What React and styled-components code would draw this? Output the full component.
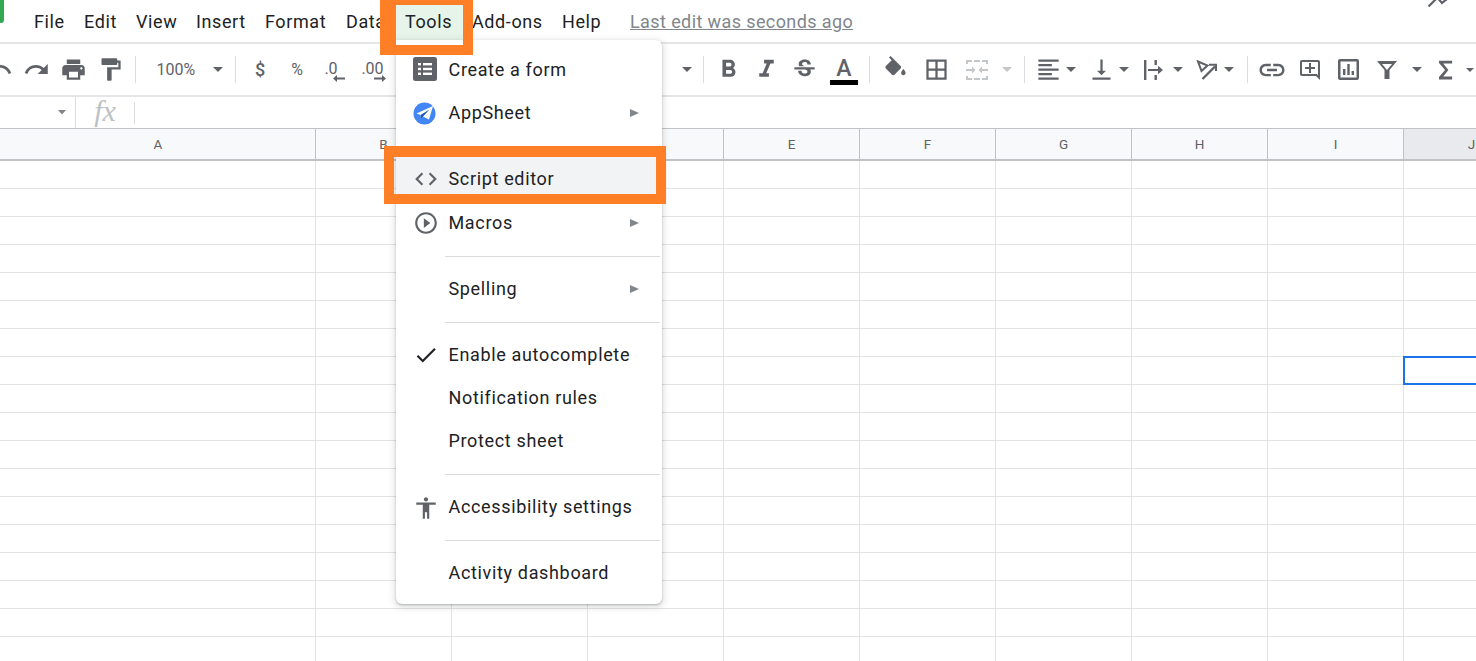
import React from 'react';
import styled, { createGlobalStyle } from 'styled-components';
import {
  MdRedo, MdUndo, MdPrint, MdFormatPaint, MdFormatBold, MdFormatItalic, MdStrikethroughS,
  MdBorderAll, MdFormatAlignLeft, MdVerticalAlignBottom, MdInsertLink,
  MdOutlineAddComment, MdCode, MdPlayCircleOutline,
  MdCheck, MdAccessibility,
} from 'react-icons/md';

const Global = createGlobalStyle`
  html, body { margin: 0; padding: 0; background: #fff; }
  body { font-family: Roboto, "Liberation Sans", sans-serif; color: #202124; }
`;

const Page = styled.div`
  position: relative;
  width: 1476px;
  height: 661px;
  overflow: hidden;
  display: flex;
  flex-direction: column;
  background: #fff;
`;

const MenuBar = styled.div`
  height: 42px;
  flex: none;
  display: flex;
  align-items: flex-start;
  border-bottom: 2px solid #e3e5e8;
  box-sizing: content-box;
`;
const Logo = styled.div`
  width: 4px;
  height: 23px;
  flex: none;
  background: #34a853;
  border-radius: 0 0 3px 0;
  margin-right: 30px;
`;
const MenuLabel = styled.span`
  font-size: 18px;
  letter-spacing: 0.6px;
  line-height: 43px;
  width: ${p => p.$w}px;
  flex: none;
  white-space: nowrap;
  color: #202124;
`;
const LastEdit = styled.span`
  font-size: 18px;
  letter-spacing: 0.4px;
  line-height: 43px;
  color: #80868b;
  text-decoration: underline;
  white-space: nowrap;
`;
const Collapse = styled.svg`
  margin-left: auto;
  margin-right: 28px;
  flex: none;
`;

const Toolbar = styled.div`
  height: 51px;
  flex: none;
  display: flex;
  align-items: center;
  margin-left: -19.5px;
  border-bottom: 2px solid #e3e5e8;
`;
const Cell = styled.div`
  width: ${p => p.$w || 37}px;
  margin-left: ${p => p.$ml || 0}px;
  flex: none;
  height: 100%;
  display: flex;
  flex-direction: column;
  align-items: center;
  justify-content: center;
  color: ${p => p.$muted ? '#c4c7c9' : '#5f6368'};
  font-size: ${p => p.$size || 27}px;
  position: relative;
`;
const Caret = styled.div`
  width: ${p => p.$w || 11}px;
  margin-left: ${p => p.$ml || 0}px;
  flex: none;
  display: flex;
  justify-content: center;
  &::before {
    content: '';
    border-left: ${p => p.$small ? 4 : 5.5}px solid transparent;
    border-right: ${p => p.$small ? 4 : 5.5}px solid transparent;
    border-top: ${p => p.$small ? 4 : 5.5}px solid ${p => p.$muted ? '#c4c7c9' : '#5f6368'};
  }
`;
const Sep = styled.div`
  width: 1px;
  height: 27px;
  flex: none;
  background: #dadce0;
  margin: 0 ${p => p.$mr ?? 6}px 0 ${p => p.$ml ?? 6}px;
`;
const ZoomText = styled.div`
  width: 64px;
  flex: none;
  font-size: 16px;
  color: #5f6368;
  padding-left: 15px;
  box-sizing: border-box;
`;
const SymbolText = styled.span`
  font-size: ${p => p.$size || 16}px;
  line-height: 18px;
  font-weight: ${p => p.$bold ? 500 : 400};
  color: #5f6368;
`;
const DecimalText = styled.span`
  font-size: 16px;
  line-height: 14px;
  color: #5f6368;
  margin-top: 5px;
  margin-left: ${p => p.$shift}px;
`;
const TinyArrow = styled.svg`
  display: block;
  margin-top: -0.5px;
  margin-left: ${p => p.$shift}px;
`;
const HiddenStretch = styled.div`
  width: 285px;
  flex: none;
`;
const TextColorBar = styled.div`
  width: 28px;
  height: 5px;
  background: #000;
  margin-top: -1px;
`;
const TextColorGlyph = styled.span`
  font-size: 23px;
  line-height: 24px;
  font-weight: 500;
  color: #5f6368;
  margin-top: 2px;
`;

const FormulaBar = styled.div`
  height: 31px;
  flex: none;
  display: flex;
  align-items: center;
`;
const NameBox = styled.div`
  width: 76px;
  height: 100%;
  flex: none;
  box-sizing: border-box;
  border-right: 1px solid #dadce0;
  display: flex;
  align-items: center;
  justify-content: flex-end;
  padding-right: 9px;
`;
const Fx = styled.div`
  width: 58px;
  flex: none;
  text-align: center;
  font-family: "Liberation Serif", serif;
  font-style: italic;
  font-size: 30px;
  color: #bdc1c6;
  line-height: 27px;
  height: 31px;
`;
const ShortSep = styled.div`
  width: 1px;
  height: 22px;
  background: #dadce0;
`;

const cols = '316px repeat(9, 136px)';
const HeaderRow = styled.div`
  display: grid;
  grid-template-columns: ${cols};
  height: 33px;
  flex: none;
  box-sizing: border-box;
  border-top: 1px solid #c0c2c5;
  border-bottom: 2px solid #c0c2c5;
  width: 1540px;
`;
const HeaderCell = styled.div`
  background: ${p => p.$active ? '#e8eaed' : '#f8f9fa'};
  border-right: 1px solid #c0c2c5;
  font-size: 13.5px;
  color: #5f6368;
  display: flex;
  align-items: center;
  justify-content: center;
  &:first-child { padding-left: 1px; }
`;
const Grid = styled.div`
  display: grid;
  grid-template-columns: ${cols};
  grid-auto-rows: 28px;
  width: 1540px;
`;
const GridCell = styled.div`
  box-sizing: border-box;
  border-right: 1px solid #e2e3e3;
  border-bottom: 1px solid #e2e3e3;
  position: relative;
  ${p => p.$active && `
    &::after {
      content: '';
      position: absolute;
      left: -1px; top: -1px; right: 0; bottom: -1px;
      border: 2px solid #1a73e8;
    }
  `}
`;

const Menu = styled.div`
  position: absolute;
  left: 396px;
  top: 40px;
  width: 266px;
  height: 564px;
  box-sizing: border-box;
  background: #fff;
  border-radius: 0 6px 6px 6px;
  box-shadow: 0 2px 6px 2px rgba(60,64,67,.15), 0 1px 2px rgba(60,64,67,.3);
  padding: 7px 0 0;
`;
const Item = styled.div`
  height: ${p => p.$h || 44}px;
  box-sizing: border-box;
  display: flex;
  align-items: center;
  background: ${p => p.$hover ? '#f1f3f4' : 'transparent'};
  font-size: 18px;
  letter-spacing: 0.66px;
  color: #202124;
  position: relative;
`;
const ItemIcon = styled.div`
  width: 52.5px;
  flex: none;
  padding-left: 17px;
  box-sizing: border-box;
  display: flex;
  align-items: center;
  font-size: ${p => p.$size || 26}px;
  color: ${p => p.$dark ? '#202124' : '#5f6368'};
`;
const ItemText = styled.span`
  flex: 1;
  white-space: nowrap;
  margin-top: ${p => p.$up ?? -1}px;
`;
const SubArrow = styled.div`
  width: 0;
  height: 0;
  margin-right: 23px;
  border-left: 9px solid #80868b;
  border-top: 4.5px solid transparent;
  border-bottom: 4.5px solid transparent;
`;
const Divider = styled.div`
  height: 22px;
  display: flex;
  align-items: center;
  padding: 0 2px 0 49px;
  &::before {
    content: '';
    flex: 1;
    height: 1px;
    background: ${p => p.$hidden ? 'transparent' : '#dadce0'};
  }
`;
const ToolsHighlight = styled.div`
  position: absolute;
  left: 396px;
  top: 5px;
  width: 67px;
  height: 35px;
  background: #e6f4ea;
`;
const ToolsLabel = styled.span`
  position: absolute;
  left: 405px;
  top: 0;
  font-size: 18px;
  letter-spacing: 0.6px;
  line-height: 43px;
  color: #202124;
`;
const Outline = styled.div`
  position: absolute;
  box-sizing: border-box;
  border-style: solid;
  border-color: #ff7f27;
`;
const ToolsOutline = styled(Outline)`
  left: 380px;
  top: -10px;
  width: 93px;
  height: 65px;
  border-width: 15px 10px 10px 16px;
`;
const ScriptOutline = styled(Outline)`
  left: 384px;
  top: 146px;
  width: 282px;
  height: 58px;
  border-width: 11px 10px 10px 10px;
`;

const FormIcon = () => (
  <svg width="24" height="24" viewBox="0 0 24 24">
    <rect width="24" height="24" rx="2.5" fill="#5f6368" />
    <g fill="#fff">
      <rect x="5" y="6" width="3" height="2.4" /><rect x="10" y="6" width="9" height="2.4" />
      <rect x="5" y="10.8" width="3" height="2.4" /><rect x="10" y="10.8" width="9" height="2.4" />
      <rect x="5" y="15.6" width="3" height="2.4" /><rect x="10" y="15.6" width="9" height="2.4" />
    </g>
  </svg>
);
const AppSheetIcon = () => (
  <svg width="23" height="23" viewBox="0 0 23 23">
    <circle cx="11.5" cy="11.5" r="11" fill="#4285f4" />
    <path d="M3.5 11.5 L20 4 L16 17.5 L10 14.5 L8 17.5 L7.5 13 Z" fill="#fff" />
    <path d="M7.5 13 L16.5 7.5 L10 14.5 L8 17.5 Z" fill="#1a56c4" />
  </svg>
);
const FillIcon = () => (
  <svg width="27" height="27" viewBox="0 0 24 24" fill="#5f6368">
    <path d="M16.56 8.94L7.62 0 6.21 1.41l2.38 2.38-5.15 5.15c-.59.59-.59 1.54 0 2.12l5.5 5.5c.29.29.68.44 1.06.44s.77-.15 1.06-.44l5.5-5.5c.59-.58.59-1.53 0-2.12z" />
    <path d="M19 11.500s-2 2.170-2 3.500c0 1.100.9 2 2 2s2-.9 2-2c0-1.330-2-3.500-2-3.500z" />
  </svg>
);
const MergeIcon = () => (
  <svg width="24" height="22" viewBox="0 0 24 22" fill="#c4c7c9">
    <path d="M1 1h6v2H3v2H1zM9 1h6v2H9zM17 1h6v4h-2V3h-4zM1 17h2v2h4v2H1zM21 17h2v4h-6v-2h4zM9 19h6v2H9z" />
    <path d="M1 10h6V7.5l3.5 3.5L7 14.500v-2.500H1zM23 10h-6V7.500L13.500 11l3.500 3.500v-2.500h6z" />
  </svg>
);
const WrapIcon = () => (
  <svg width="20" height="20" viewBox="0 0 20 20" fill="#5f6368">
    <rect x="0" y="0" width="2.400" height="20" />
    <rect x="10.500" y="0" width="2.400" height="5" /><rect x="10.500" y="15" width="2.400" height="5" />
    <path d="M4 9h10V5.800L19 10l-5 4.200V11H4z" />
  </svg>
);
const RotateIcon = () => (
  <svg width="21" height="20" viewBox="0 0 21 20" fill="none" stroke="#5f6368" strokeWidth="2">
    <path d="M2 1.500 L11.500 5.500 L5.500 11 Z" />
    <path d="M6.500 19 L19 6.500" strokeWidth="2.400" />
    <path d="M13 4.800 H20 V11" strokeWidth="2" />
  </svg>
);
const ChartIcon = () => (
  <svg width="21" height="21" viewBox="0 0 21 21" fill="#5f6368">
    <path d="M2 0h17a2 2 0 0 1 2 2v17a2 2 0 0 1-2 2H2a2 2 0 0 1-2-2V2a2 2 0 0 1 2-2zm.5 2.500v16h16v-16z" />
    <rect x="5" y="10" width="2.400" height="6" /><rect x="9.300" y="5" width="2.400" height="11" /><rect x="13.600" y="12" width="2.400" height="4" />
  </svg>
);
const FilterIcon = () => (
  <svg width="20" height="18" viewBox="0 0 20 18">
    <path d="M0 0h20l-7.500 9v9h-5V9z" fill="#5f6368" />
    <path d="M5 3h10l-5 6z" fill="#fff" />
  </svg>
);
const SigmaIcon = () => (
  <svg width="15" height="20" viewBox="0 0 16 20" fill="#5f6368">
    <path d="M0 0h14v3H4.500L10 10l-5.500 7H14v3H0v-2.500L6.500 10 0 2.500z" />
  </svg>
);
const SmallCaret = () => (
  <svg width="8" height="5" viewBox="0 0 8 5"><path d="M0 0h8L4 4.500z" fill="#80868b" /></svg>
);

const GRID_ROWS = 18;
const columnNames = ['A', 'B', 'C', 'D', 'E', 'F', 'G', 'H', 'I', 'J'];
const menuNames = [['File', 50], ['Edit', 52], ['View', 60], ['Insert', 69], ['Format', 81], ['Data', 59], ['Tools', 67], ['Add-ons', 90], ['Help', 68]];

export default function App() {
  return (
    <Page>
      <Global />
      <MenuBar>
        <Logo />
        {menuNames.map(([n, w]) => <MenuLabel key={n} $w={w}>{n}</MenuLabel>)}
        <LastEdit>Last edit was seconds ago</LastEdit>
        <Collapse width="20" height="7" viewBox="0 0 20 7" fill="none" stroke="#5f6368" strokeWidth="2.200">
          <path d="M0.500 6.500 L8 -1 M10.500 -1 L14 3 L19 -1" />
        </Collapse>
      </MenuBar>
      <Toolbar>
        <Cell><MdUndo /></Cell>
        <Cell><MdRedo /></Cell>
        <Cell><MdPrint /></Cell>
        <Cell><MdFormatPaint /></Cell>
        <Sep />
        <ZoomText>100%</ZoomText>
        <Caret $w={25} />
        <Sep $ml={4} />
        <Cell><SymbolText $size={18} $bold>$</SymbolText></Cell>
        <Cell><SymbolText>%</SymbolText></Cell>
        <Cell>
          <DecimalText $shift={-6}>.0</DecimalText>
          <TinyArrow $shift={10} width="12" height="7" viewBox="0 0 12 7" fill="#5f6368"><path d="M12 2.500H4V0L0 3.500 4 7V4.500h8z" /></TinyArrow>
        </Cell>
        <Cell>
          <DecimalText $shift={3}>.00</DecimalText>
          <TinyArrow $shift={18} width="12" height="7" viewBox="0 0 12 7" fill="#5f6368"><path d="M0 2.500h8V0l4 3.500L8 7V4.500H0z" /></TinyArrow>
        </Cell>
        <HiddenStretch />
        <Caret $w={25} />
        <Sep $ml={3} />
        <Cell $size={29}><MdFormatBold /></Cell>
        <Cell $w={39} $size={29}><MdFormatItalic /></Cell>
        <Cell $w={37.5}><MdStrikethroughS /></Cell>
        <Cell $w={42}>
          <TextColorGlyph>A</TextColorGlyph>
          <TextColorBar />
        </Cell>
        <Sep $ml={3.5} />
        <Cell $w={39}><FillIcon /></Cell>
        <Cell $w={43}><MdBorderAll /></Cell>
        <Cell $w={39}><MergeIcon /></Cell>
        <Caret $w={21} $muted />
        <Sep />
        <Cell $w={35}><MdFormatAlignLeft /></Cell>
        <Caret />
        <Cell $w={35} $ml={7}><MdVerticalAlignBottom /></Cell>
        <Caret />
        <Cell $w={38} $ml={5}><WrapIcon /></Cell>
        <Caret />
        <Cell $w={35} $ml={5}><RotateIcon /></Cell>
        <Caret />
        <Sep $ml={12.500} $mr={0} />
        <Cell $ml={5.500} $size={30}><MdInsertLink /></Cell>
        <Cell $ml={1} $size={24}><MdOutlineAddComment /></Cell>
        <Cell $ml={1}><ChartIcon /></Cell>
        <Cell $ml={2}><FilterIcon /></Cell>
        <Caret $ml={6} />
        <Cell $ml={5}><SigmaIcon /></Cell>
        <Caret $small />
      </Toolbar>
      <FormulaBar>
        <NameBox><SmallCaret /></NameBox>
        <Fx>fx</Fx>
        <ShortSep />
      </FormulaBar>
      <HeaderRow>
        {columnNames.map(c => <HeaderCell key={c} $active={c === 'J'}>{c}</HeaderCell>)}
      </HeaderRow>
      <Grid>
        {Array.from({ length: GRID_ROWS * 10 }, (_, i) => (
          <GridCell key={i} $active={i === 79} />
        ))}
      </Grid>

      <ToolsHighlight />
      <ToolsLabel>Tools</ToolsLabel>
      <Menu>
        <Item><ItemIcon><FormIcon /></ItemIcon><ItemText $up={0}>Create a form</ItemText></Item>
        <Item><ItemIcon><AppSheetIcon /></ItemIcon><ItemText>AppSheet</ItemText><SubArrow /></Item>
        <Divider $hidden />
        <Item $hover><ItemIcon><MdCode /></ItemIcon><ItemText>Script editor</ItemText></Item>
        <Item><ItemIcon><MdPlayCircleOutline /></ItemIcon><ItemText>Macros</ItemText><SubArrow /></Item>
        <Divider />
        <Item><ItemIcon /><ItemText>Spelling</ItemText><SubArrow /></Item>
        <Divider />
        <Item $h={43.500}><ItemIcon $dark><MdCheck /></ItemIcon><ItemText>Enable autocomplete</ItemText></Item>
        <Item $h={43.500}><ItemIcon /><ItemText>Notification rules</ItemText></Item>
        <Item $h={43.500}><ItemIcon /><ItemText $up={-2}>Protect sheet</ItemText></Item>
        <Divider />
        <Item><ItemIcon><MdAccessibility /></ItemIcon><ItemText $up={-2}>Accessibility settings</ItemText></Item>
        <Divider />
        <Item><ItemIcon /><ItemText $up={-2}>Activity dashboard</ItemText></Item>
      </Menu>
      <ToolsOutline />
      <ScriptOutline />
    </Page>
  );
}
